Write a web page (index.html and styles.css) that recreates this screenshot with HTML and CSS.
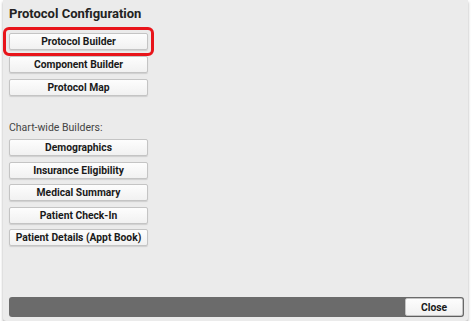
FILE: index.html
```html
<!DOCTYPE html>
<html>
<head>
  <title>Protocol Configuration</title>
  <link rel="stylesheet" href="styles.css">
</head>
<body>
  <div class="dialog">
    <h1>Protocol Configuration</h1>

    <div class="button-list">
      <div class="highlight">
        <button class="btn">Protocol Builder</button>
      </div>
      <button class="btn">Component Builder</button>
      <button class="btn">Protocol Map</button>
    </div>

    <div class="section-label">Chart-wide Builders:</div>

    <div class="button-list tight">
      <button class="btn">Demographics</button>
      <button class="btn">Insurance Eligibility</button>
      <button class="btn">Medical Summary</button>
      <button class="btn">Patient Check-In</button>
      <button class="btn">Patient Details (Appt Book)</button>
    </div>

    <div class="footer-bar">
      <button class="btn close-btn">Close</button>
    </div>
  </div>
</body>
</html>
```

FILE: styles.css
```css
body {
  margin: 0;
  background-color: #ffffff;
  font-family: Roboto, 'Liberation Sans', Arial, sans-serif;
}

.dialog {
  position: relative;
  width: 465px;
  height: 321px;
  margin-left: 3px;
  background-color: #ebebeb;
  box-shadow: 0 2px 3px rgba(0, 0, 0, 0.35);
  border-radius: 0 0 3px 3px;
  display: flex;
  flex-direction: column;
  padding: 0 4px 0 6px;
  box-sizing: border-box;
}

h1 {
  font-size: 13px;
  font-weight: bold;
  color: #222;
  margin: 5px 0 0 0;
  height: 28px;
  line-height: 18px;
}

.button-list {
  display: flex;
  flex-direction: column;
  gap: 6px;
  width: 139px;
}

.button-list.tight {
  gap: 5.5px;
}

.highlight {
  position: relative;
}

.highlight::before {
  content: "";
  position: absolute;
  left: -6px;
  top: -6px;
  right: -6px;
  bottom: -6px;
  border: 3px solid #e8141a;
  border-radius: 6px;
}

.btn {
  display: block;
  width: 139px;
  height: 17px;
  padding: 0;
  font-family: Roboto, 'Liberation Sans', Arial, sans-serif;
  font-size: 10.3px;
  font-weight: bold;
  color: #1a1a1a;
  background: linear-gradient(#fdfdfd, #f1f1f1);
  border: 1px solid #c4c4c4;
  border-radius: 2px;
  box-shadow: 0 1px 1px rgba(0, 0, 0, 0.12);
}

.section-label {
  font-size: 10.5px;
  color: #444;
  margin: 25px 0 5px 0;
}

.footer-bar {
  margin-top: auto;
  margin-bottom: 4px;
  height: 20px;
  background-color: #6b6b6b;
  border-radius: 3px;
  display: flex;
  justify-content: flex-end;
  align-items: center;
  padding-right: 1px;
}

.close-btn {
  width: 58px;
  height: 18px;
}
```
